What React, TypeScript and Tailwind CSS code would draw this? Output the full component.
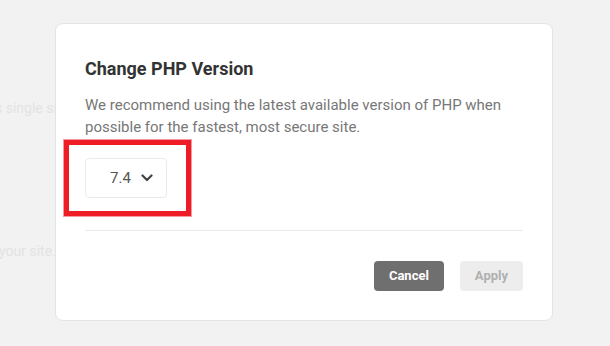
import React from "react";

export default function App() {
  return (
    <div className="relative w-[610px] h-[346px] overflow-hidden bg-[#f2f2f2] font-['Roboto',sans-serif]">
      <div className="pt-[98px] text-[14px] leading-[20px] text-[#e3e3e3] whitespace-nowrap">
        <p className="-ml-[5px]">s single site.</p>
        <p className="mt-[123px] -ml-[1px]">your site.</p>
      </div>

      <div className="absolute left-[55px] top-[23px] w-[498px] h-[298px] rounded-[8px] border border-[#e4e4e4] bg-white px-[29px] pt-[33px]">
        <h2 className="text-[18px] leading-[24px] font-bold text-[#333333]">Change PHP Version</h2>
        <p className="mt-[13px] text-[15px] leading-[22px] text-[#777777]">
          We recommend using the latest available version of PHP when possible for the fastest, most secure site.
        </p>

        <div className="relative mt-[20px] w-[82px]">
          <button className="flex h-[40px] w-[82px] items-center rounded-[4px] border border-[#ebebeb] bg-white pl-[24px] text-[15px] text-[#555555]">
            <span>7.4</span>
            <svg className="ml-[10px]" width="12" height="8" viewBox="0 0 12 8" fill="none">
              <path d="M1.5 1.5 L6 6 L10.5 1.5" stroke="#444444" strokeWidth="2.2" strokeLinecap="round" strokeLinejoin="round" />
            </svg>
          </button>
          <div className="pointer-events-none absolute left-[-21px] top-[-18px] w-[127px] h-[76px] border-[5px] border-[#ee1c25] shadow-[0_0_0_1px_#f59aa0]" />
        </div>

        <div className="mt-[32px] h-px bg-[#ebebeb]" />

        <div className="mt-[30px] flex justify-end gap-[16px]">
          <button className="h-[30px] rounded-[4px] bg-[#6f6f6f] px-[15px] text-[13px] font-bold text-white">Cancel</button>
          <button className="h-[30px] rounded-[4px] bg-[#ededed] px-[15px] text-[13px] font-bold text-[#b0b0b0]">Apply</button>
        </div>
      </div>
    </div>
  );
}
